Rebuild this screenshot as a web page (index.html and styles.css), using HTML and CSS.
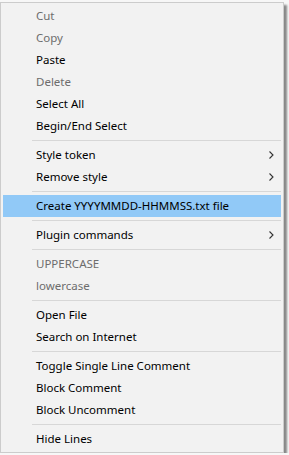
FILE: index.html
```html
<!DOCTYPE html>
<html lang="en">
<head>
  <meta charset="utf-8">
  <title>Context menu</title>
  <link rel="stylesheet" href="styles.css">
</head>
<body>
<div class="menu">
  <div class="item disabled">Cut</div>
  <div class="item disabled">Copy</div>
  <div class="item">Paste</div>
  <div class="item disabled">Delete</div>
  <div class="item">Select All</div>
  <div class="item">Begin/End Select</div>
  <div class="sep"></div>
  <div class="item sub">Style token
    <svg class="arrow" width="5" height="8" viewBox="0 0 5 8"><path d="M0.5 0.5 L4 4 L0.5 7.5" fill="none" stroke="#333" stroke-width="1.1"/></svg>
  </div>
  <div class="item sub">Remove style
    <svg class="arrow" width="5" height="8" viewBox="0 0 5 8"><path d="M0.5 0.5 L4 4 L0.5 7.5" fill="none" stroke="#333" stroke-width="1.1"/></svg>
  </div>
  <div class="sep"></div>
  <div class="item hot">Create YYYYMMDD-HHMMSS.txt file</div>
  <div class="sep"></div>
  <div class="item sub">Plugin commands
    <svg class="arrow" width="5" height="8" viewBox="0 0 5 8"><path d="M0.5 0.5 L4 4 L0.5 7.5" fill="none" stroke="#333" stroke-width="1.1"/></svg>
  </div>
  <div class="sep"></div>
  <div class="item disabled">UPPERCASE</div>
  <div class="item disabled">lowercase</div>
  <div class="sep"></div>
  <div class="item">Open File</div>
  <div class="item">Search on Internet</div>
  <div class="sep"></div>
  <div class="item">Toggle Single Line Comment</div>
  <div class="item">Block Comment</div>
  <div class="item">Block Uncomment</div>
  <div class="sep"></div>
  <div class="item">Hide Lines</div>
</div>
</body>
</html>
```
FILE: styles.css
```css
html, body {
  margin: 0;
  padding: 0;
}
body {
  background-color: #f7f7f7;
  font-family: "Noto Sans", "Open Sans", sans-serif;
  font-size: 11.5px;
  color: #000;
}

.menu {
  margin-top: 2px;
  width: 282px;
  padding: 2px 0;
  background-color: #f2f2f2;
  border: 1px solid #cccccc;
  box-shadow: 3px 3px 2px rgba(0, 0, 0, 0.45);
}

.item {
  position: relative;
  height: 22px;
  line-height: 22px;
  margin: 0 2px;
  padding-left: 33px;
  white-space: nowrap;
}
.item.disabled {
  color: #6d6d6d;
}
.item.hot {
  background-color: #91c9f7;
}
.arrow {
  position: absolute;
  right: 7px;
  top: 7px;
}

.sep {
  height: 7px;
  margin-left: 31px;
  margin-right: 2px;
  background: linear-gradient(#d7d7d7, #d7d7d7) no-repeat 0 3px / 100% 1px;
}
```
